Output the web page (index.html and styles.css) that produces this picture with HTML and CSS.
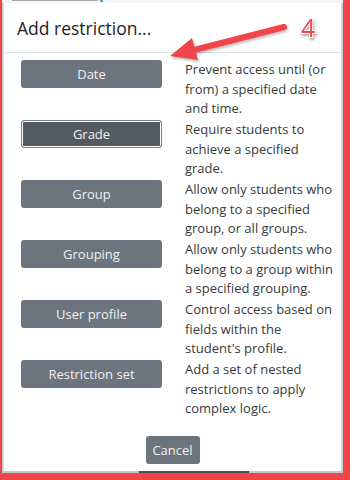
FILE: index.html
```html
<!DOCTYPE html>
<html lang="en">
<head>
  <meta charset="UTF-8" />
  <title>Add restriction</title>
  <link rel="stylesheet" href="styles.css">
</head>
<body>
  <div class="frame">
    <div class="page">
      <div class="topstrip"><span class="crumb"></span><span class="crumb-dot"></span></div>
      <div class="modal">
        <div class="modal-header">
          <h2>Add restriction...</h2>
        </div>
        <div class="modal-body">
          <div class="row">
            <button class="btn">Date</button>
            <p>Prevent access until (or from) a specified date and time.</p>
          </div>
          <div class="row">
            <button class="btn focused">Grade</button>
            <p>Require students to achieve a specified grade.</p>
          </div>
          <div class="row">
            <button class="btn">Group</button>
            <p>Allow only students who belong to a specified group, or all groups.</p>
          </div>
          <div class="row">
            <button class="btn">Grouping</button>
            <p>Allow only students who belong to a group within a specified grouping.</p>
          </div>
          <div class="row">
            <button class="btn">User profile</button>
            <p>Control access based on fields within the student's profile.</p>
          </div>
          <div class="row">
            <button class="btn">Restriction set</button>
            <p>Add a set of nested restrictions to apply complex logic.</p>
          </div>
        </div>
        <div class="modal-footer">
          <button class="btn cancel">Cancel</button>
        </div>
      </div>
      <div class="under"></div>
    </div>
  </div>

  <!-- annotation drawn over the screenshot -->
  <svg class="annotation" width="350" height="480" viewBox="0 0 350 480">
    <g class="arrow">
      <line x1="284" y1="27" x2="190" y2="51" stroke="#f2444b" stroke-width="6" stroke-linecap="round"/>
      <polygon points="170,56 192,38 198,60" fill="#f2444b"/>
    </g>
    <text x="301" y="37" class="step">4</text>
  </svg>
</body>
</html>
```

FILE: styles.css
```css
body {
  margin: 0;
  background: #f2444b;
  font-family: 'Open Sans', 'Noto Sans', sans-serif;
  color: #373a3c;
}
.frame {
  width: 350px;
  height: 480px;
  padding: 0 7px 7px 2px;
  box-sizing: border-box;
}
.page {
  height: 100%;
  background: #c3c6c9;
  display: flex;
  flex-direction: column;
}
.topstrip {
  height: 3px;
  background: #f4f4f4;
  display: flex;
  align-items: flex-start;
  padding-left: 10px;
  gap: 2px;
}
.crumb {
  width: 86px;
  height: 1px;
  background: #a9a9a9;
}
.crumb-dot {
  width: 3px;
  height: 2px;
  background: #5aa0c8;
}
.modal {
  flex: 1;
  margin-left: 1px;
  margin-right: 1px;
  background: #fff;
  border-left: 1px solid #dcdcdc;
  border-right: 1px solid #dcdcdc;
  display: flex;
  flex-direction: column;
}
.modal-header {
  height: 49px;
  border-bottom: 1px solid #dee2e6;
  padding: 0 13px;
  display: flex;
  align-items: center;
}
.modal-header h2 {
  margin: 0;
  font-size: 17.5px;
  font-weight: 400;
  color: #1d2125;
}
.modal-body {
  padding: 7px 0 0 17px;
}
.row {
  display: grid;
  grid-template-columns: 141px 1fr;
  column-gap: 23px;
  margin-bottom: 1.5px;
}
.row p {
  margin: 0;
  font-size: 13px;
  line-height: 19.5px;
  padding-right: 4px;
}
.btn {
  height: 28px;
  border: none;
  border-radius: 3px;
  background: #6c757d;
  color: #eef0f2;
  font-family: inherit;
  font-size: 13px;
  padding: 0;
  cursor: pointer;
}
.btn.focused {
  background: #545b62;
  border: 1px solid #7c8389;
  box-shadow: inset 0 0 0 1px #fff;
}
.modal-footer {
  flex: 1;
  display: flex;
  justify-content: center;
  align-items: flex-end;
  padding-bottom: 7px;
}
.cancel {
  width: 54px;
}
.under {
  height: 2px;
  margin: 0 94px 0 137px;
  background: #4a5056;
}
.annotation {
  position: absolute;
  left: 0;
  top: 0;
  pointer-events: none;
}
.arrow {
  filter: drop-shadow(1px 2px 1px rgba(0,0,0,0.25));
}
.step {
  font-family: 'Open Sans', sans-serif;
  font-size: 25px;
  fill: #f2444b;
  stroke: #fff;
  stroke-width: 2px;
  paint-order: stroke;
  filter: drop-shadow(1px 2px 1px rgba(0,0,0,0.35));
}
```
